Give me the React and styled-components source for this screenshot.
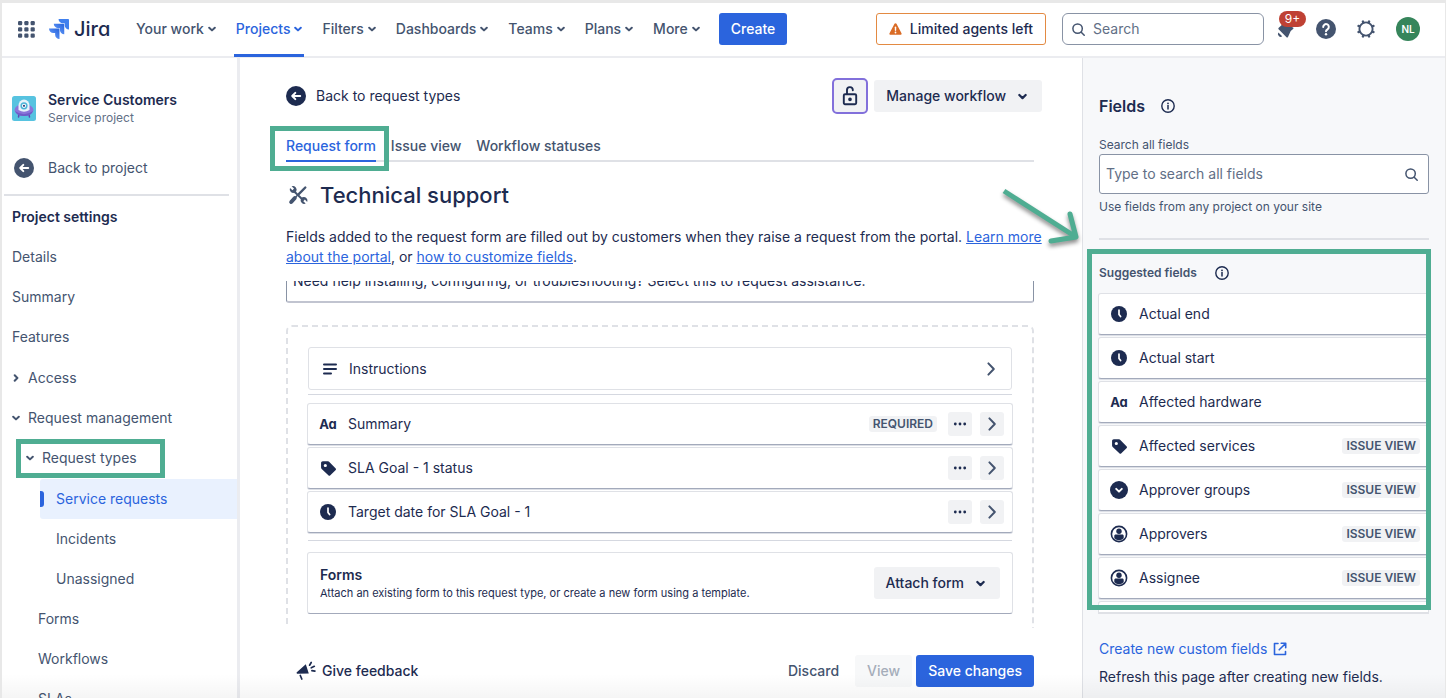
import React from "react";
import styled, { createGlobalStyle, css } from "styled-components";

const c = {
  ink: "#1D2B50",
  text: "#44546F",
  faint: "#626F86",
  blue: "#2B64DD",
  line: "#DFE1E6",
  soft: "#EBECF0",
  fill: "#F1F2F4",
  green: "#4FAD92",
};

const GlobalStyle = createGlobalStyle`
  *, *::before, *::after { box-sizing: border-box; }
  body { margin: 0; background: #fff; }
  body, button, input { font-family: Inter, "Liberation Sans", sans-serif; font-size: 14px; line-height: 20px; color: ${c.ink}; }
  button { cursor: pointer; }
  ul, h1, h2, p { margin: 0; padding: 0; list-style: none; font-weight: inherit; }
  a { color: inherit; text-decoration: none; }
  svg { display: block; flex: none; }
`;

const Page = styled.div`
  position: relative;
  display: flex;
  flex-direction: column;
  height: 100vh;
  overflow: hidden;
  border: solid #e8e8e8;
  border-width: 3px 1px 0 2px;
  &::after {
    content: "";
    position: absolute;
    inset: auto 0 0 0;
    height: 24px;
    background: linear-gradient(rgba(0, 0, 0, 0), rgba(0, 0, 0, 0.04));
    pointer-events: none;
  }
`;

/* ---------- top bar ---------- */

const Header = styled.header`
  flex: none;
  display: flex;
  align-items: center;
  height: 55px;
  padding: 0 25px 1px 16px;
  border-bottom: 2px solid ${c.soft};
`;

const IconButton = styled.button`
  display: flex;
  align-items: center;
  justify-content: center;
  padding: 0;
  border: 0;
  background: none;
  color: ${c.text};
`;

const Logo = styled.a`
  display: flex;
  align-items: center;
  gap: 5px;
  width: 85px;
  margin-left: 14px;
  font-size: 20px;
  line-height: 28px;
  font-weight: 500;
  font-feature-settings: "cv11";
`;

const Nav = styled.nav`
  align-self: stretch;
  display: flex;
  gap: 16px;
`;

const NavItem = styled.a`
  position: relative;
  display: flex;
  align-items: center;
  gap: 4px;
  padding: 0 2px;
  font-weight: 500;
  white-space: nowrap;
  color: ${(p) => (p.$active ? c.blue : c.text)};
  ${(p) =>
    p.$active &&
    css`
      &::after {
        content: "";
        position: absolute;
        inset: auto 0 -2px 0;
        height: 3px;
        background: ${c.blue};
      }
    `}
`;

const Button = styled.button`
  display: inline-flex;
  align-items: center;
  justify-content: center;
  gap: 8px;
  height: 32px;
  padding: 0 12px;
  border: 0;
  border-radius: 3px;
  font-weight: 500;
  white-space: nowrap;
  background: ${(p) => ({ primary: c.blue, subtle: "transparent", warning: "#fff", off: "#F7F8F9" })[p.$kind] || c.fill};
  color: ${(p) => ({ primary: "#fff", subtle: c.text, off: "#A5ADBA" })[p.$kind] || c.ink};
  ${(p) => p.$kind === "warning" && `border: 1px solid #E38A42;`}
`;

const ChevronSlot = styled.span`
  display: flex;
  justify-content: center;
  width: 16px;
`;

const CreateSlot = styled.div`
  margin: 0 auto 0 17px;
`;

const SearchBox = styled.label`
  display: flex;
  align-items: center;
  gap: 8px;
  width: 202px;
  height: 32px;
  margin-left: 16px;
  padding: 0 9px;
  border: 1px solid #8993A5;
  border-radius: 6px;
  color: ${c.text};
  input {
    flex: 1;
    min-width: 0;
    padding: 0;
    border: 0;
    outline: 0;
    background: none;
  }
  input::placeholder { color: ${c.faint}; opacity: 1; }
`;

const Tools = styled.div`
  display: flex;
  align-items: center;
  gap: 20px;
  margin-left: 12px;
`;

const Bell = styled(IconButton)`
  position: relative;
  width: 20px;
  height: 20px;
`;

const Count = styled.span`
  position: absolute;
  left: 3px;
  top: -8px;
  width: 27px;
  height: 16px;
  border-radius: 8px;
  background: #BF4134;
  color: #fff;
  font-size: 12px;
  line-height: 16px;
  text-align: center;
`;

const Avatar = styled.button`
  width: 24px;
  height: 24px;
  padding: 0;
  border: 0;
  border-radius: 50%;
  background: #36855B;
  color: #fff;
  font-size: 10px;
  line-height: 24px;
  font-weight: 600;
`;

/* ---------- sidebar ---------- */

const Body = styled.div`
  flex: 1;
  min-height: 0;
  display: flex;
`;

const Sidebar = styled.aside`
  flex: none;
  width: 238px;
  overflow: hidden;
  border-right: 3px solid ${c.soft};
  color: ${c.text};
`;

const Project = styled.div`
  display: flex;
  align-items: center;
  gap: 12px;
  padding: 32px 10px 0;
`;

const ProjectName = styled.div`
  font-weight: 600;
  color: ${c.ink};
`;

const ProjectKind = styled.div`
  font-size: 12px;
  line-height: 16px;
  color: ${c.faint};
`;

const BackLink = styled.a`
  display: flex;
  align-items: center;
  gap: ${(p) => p.$gap || 14}px;
`;

const SideBack = styled.div`
  margin: 0 8px 0 2px;
  padding: 32px 10px 16px;
  border-bottom: 2px solid ${c.line};
`;

const SideTitle = styled.h2`
  padding: 0 10px;
  font-size: 14px;
  line-height: 41px;
  font-weight: 600;
  color: ${c.ink};
`;

const Tree = styled.ul`
  ${(p) => p.$gapTop && `padding-top: 1px;`}
`;

const TreeLink = styled.a`
  position: relative;
  display: flex;
  align-items: center;
  gap: 8px;
  height: 40px;
  padding-left: ${(p) => p.$indent}px;
`;

const CurrentLink = styled(TreeLink)`
  margin-left: 38px;
  padding-left: 16px;
  border-radius: 3px 0 0 3px;
  background: #E9F1FE;
  color: ${c.blue};
  &::before {
    content: "";
    position: absolute;
    left: 0;
    top: 12px;
    width: 4px;
    height: 16px;
    border-radius: 0 3px 3px 0;
    background: ${c.blue};
  }
`;

const Frame = styled.span`
  position: absolute;
  inset: ${(p) => p.$inset};
  border: 5px solid ${c.green};
  pointer-events: none;
`;

/* ---------- main column ---------- */

const Main = styled.main`
  flex: 1;
  min-width: 0;
  display: flex;
  flex-direction: column;
  padding: 20px 48px 11px 46px;
`;

const TopRow = styled.div`
  display: flex;
  align-items: center;
  gap: 6px;
  margin-right: -8px;
  a { margin-right: auto; }
`;

const LockButton = styled(IconButton)`
  width: 36px;
  height: 36px;
  border: 2px solid #8270DB;
  border-radius: 5px;
  background: ${c.fill};
  color: ${c.ink};
`;

const Tabs = styled.nav`
  display: flex;
  gap: 15px;
  margin-top: 16px;
  border-bottom: 2px solid ${c.line};
`;

const Tab = styled.a`
  position: relative;
  padding: 6px 0 4px;
  font-weight: 500;
  color: ${(p) => (p.$active ? c.blue : c.text)};
  ${(p) => p.$active && `box-shadow: 0 2px ${c.blue};`}
`;

const TitleRow = styled.div`
  display: flex;
  align-items: center;
  gap: 10px;
  margin-top: 19px;
  color: ${c.text};
`;

const Title = styled.h1`
  font-size: 22px;
  line-height: 28px;
  font-weight: 500;
  color: ${c.ink};
`;

const Intro = styled.p`
  margin: 18px -8px 14px 0;
  a { color: ${c.blue}; text-decoration: underline; }
`;

const Scroller = styled.div`
  flex: 1;
  min-height: 0;
  overflow: hidden;
`;

const DescriptionInput = styled.input`
  display: block;
  width: 100%;
  height: 44px;
  margin-top: -22px;
  padding: 0 6px;
  border: 1px solid #8993A5;
  border-bottom: 2px solid #C1C4D0;
  border-radius: 3px;
`;

const DropZone = styled.section`
  margin-top: 22px;
  padding: 20px 19px 60px;
  border: 2px dashed ${c.line};
  border-radius: 6px;
`;

const cardBase = css`
  display: flex;
  align-items: center;
  background: #fff;
  border-radius: 3px;
`;

const InstructionsCard = styled.div`
  ${cardBase}
  height: 43px;
  margin: 0 1px;
  padding: 0 12px 0 13px;
  border: 1px solid ${c.line};
  gap: 11px;
`;

const Rule = styled.hr`
  height: 1px;
  margin: ${(p) => p.$margin};
  border: 0;
  background: #D5D8E0;
`;

const CardList = styled.ul`
  display: flex;
  flex-direction: column;
  gap: 2px;
`;

const FieldCard = styled.li`
  ${cardBase}
  flex: none;
  height: 42px;
  padding: 0 8px 0 11px;
  gap: 11px;
  border: 1px solid ${c.line};
  border-bottom-color: #A3AABB;
  box-shadow: 0 1px #DCDFE6;
`;

const FieldName = styled.span`
  flex: 1;
`;

const Glyph = styled.span`
  display: flex;
  justify-content: center;
  width: 18px;
  color: ${c.ink};
  font-size: 13px;
  font-weight: 700;
  font-feature-settings: "cv11";
`;

const Lozenge = styled.span`
  padding: 0 4px;
  border-radius: 3px;
  background: ${c.fill};
  color: ${c.text};
  font-size: 12px;
  line-height: 16px;
  font-weight: 600;
`;

const Square = styled(IconButton)`
  width: 24px;
  height: 24px;
  border-radius: 3px;
  background: ${c.fill};
`;

const Actions = styled.div`
  display: flex;
  align-items: center;
  gap: 8px;
`;

const FormsCard = styled.div`
  ${cardBase}
  justify-content: space-between;
  height: 62px;
  padding: 0 12px;
  border: 1px solid ${c.line};
  border-bottom-color: #A3AABB;
`;

const FormsTitle = styled.h2`
  font-size: 14px;
  font-weight: 600;
`;

const FormsNote = styled.p`
  font-size: 11px;
  line-height: 16px;
`;

const Footer = styled.footer`
  display: flex;
  align-items: center;
  gap: 4px;
  margin-top: 27px;
`;

const Feedback = styled.button`
  display: flex;
  align-items: center;
  gap: 6px;
  margin-right: auto;
  padding: 0 0 0 10px;
  border: 0;
  background: none;
  font-weight: 500;
`;

/* ---------- fields panel ---------- */

const Panel = styled.aside`
  position: relative;
  flex: none;
  width: 363px;
  display: flex;
  flex-direction: column;
  padding: 38px 16px 11px;
  border-left: 1px solid ${c.line};
  background: #F7F8FA;
`;

const PanelTitle = styled.h2`
  display: flex;
  align-items: center;
  gap: 16px;
  font-size: 16px;
  font-weight: 600;
`;

const FieldLabel = styled.label`
  margin-top: 21px;
  font-size: 12px;
  line-height: 16px;
  color: ${c.text};
`;

const PanelSearch = styled(SearchBox)`
  width: auto;
  height: 40px;
  margin: 1px 0 5px;
  padding: 0 10px 0 6px;
  border-radius: 3px;
  background: #fff;
`;

const Hint = styled.p`
  font-size: 12px;
  line-height: 16px;
  color: ${c.text};
`;

const Suggested = styled.section`
  position: relative;
  flex: 1;
  min-height: 0;
  display: flex;
  flex-direction: column;
  margin-top: 23px;
  border-top: 2px solid ${c.line};
`;

const SuggestedTitle = styled.h2`
  display: flex;
  align-items: center;
  gap: 18px;
  padding: 23px 0 10px;
  font-size: 12px;
  font-weight: 600;
  color: ${c.text};
  svg { color: ${c.ink}; }
`;

const SuggestedList = styled(CardList)`
  flex: 1;
  min-height: 0;
  margin-left: -1px;
  overflow: hidden;
  border-bottom: 2px solid ${c.line};
`;

const PanelLink = styled.a`
  display: flex;
  align-items: center;
  gap: 6px;
  margin: 25px 0 8px;
  color: ${c.blue};
`;

const Pointer = styled.svg`
  position: absolute;
  left: -84px;
  top: 124px;
  filter: drop-shadow(0 3px 2px rgba(0, 0, 0, 0.45));
  pointer-events: none;
`;

/* ---------- icons ---------- */

const Chevron = ({ dir = "down", size = 8, w = 2 }) => (
  <svg width={size} height={size} viewBox="0 0 8 8" fill="none" stroke="currentColor" strokeWidth={w} strokeLinecap="round" strokeLinejoin="round">
    <path d={dir === "down" ? "M1.2 2.7 4 5.4l2.8-2.7" : "M2.7 1.2 5.4 4 2.7 6.8"} />
  </svg>
);

const DropChevron = () => <ChevronSlot><Chevron size={9} /></ChevronSlot>;

const ArrowLeft = ({ color }) => (
  <svg width="20" height="20" viewBox="0 0 20 20">
    <circle cx="10" cy="10" r="10" fill={color} />
    <path d="M14.2 10H6.2M9.3 6.9 6.2 10l3.1 3.1" fill="none" stroke="#fff" strokeWidth="2" strokeLinecap="round" strokeLinejoin="round" />
  </svg>
);

const Info = () => (
  <svg width="14" height="14" viewBox="0 0 14 14">
    <circle cx="7" cy="7" r="6.2" fill="none" stroke="currentColor" strokeWidth="1.4" />
    <circle cx="7" cy="4.3" r=".9" fill="currentColor" />
    <path d="M7 6.5v3.6" stroke="currentColor" strokeWidth="1.5" strokeLinecap="round" />
  </svg>
);

const SearchIcon = () => (
  <svg width="13" height="13" viewBox="0 0 13 13" fill="none" stroke="currentColor" strokeWidth="1.5" strokeLinecap="round">
    <circle cx="5.6" cy="5.6" r="4.7" />
    <path d="m9.2 9.2 3 3" />
  </svg>
);

const Clock = () => (
  <svg width="16" height="16" viewBox="0 0 16 16">
    <circle cx="8" cy="8" r="8" fill="currentColor" />
    <path d="M8 4.2V8.4l1.6 2.2" fill="none" stroke="#fff" strokeWidth="1.7" strokeLinecap="round" strokeLinejoin="round" />
  </svg>
);

const Tag = () => (
  <svg width="17" height="17" viewBox="0 0 16 16">
    <path fillRule="evenodd" fill="currentColor" d="M2.6 1.2h4.9c.5 0 1 .2 1.3.6l6 6.1c.4.4.4 1 0 1.4l-5.3 5.3c-.4.4-1 .4-1.4 0L1.6 8.5a2 2 0 0 1-.6-1.400V2.800c0-.9.700-1.600 1.600-1.600ZM5 3.700a1.500 1.500 0 1 0 0 3 1.500 1.500 0 0 0 0-3Z" />
  </svg>
);

const Group = () => (
  <svg width="18" height="18" viewBox="0 0 18 18">
    <circle cx="9" cy="9" r="9" fill="currentColor" />
    <path d="m6.200 7.900 2.800 2.700 2.800-2.700" fill="none" stroke="#fff" strokeWidth="2" strokeLinecap="round" strokeLinejoin="round" />
  </svg>
);

const Person = () => (
  <svg width="18" height="18" viewBox="0 0 18 18" fill="currentColor">
    <circle cx="9" cy="9" r="7.600" fill="none" stroke="currentColor" strokeWidth="1.600" />
    <circle cx="9" cy="6.200" r="2.700" />
    <path d="M4.300 10.900c0-.8.600-1.400 1.400-1.400h6.600c.8 0 1.400.6 1.400 1.400v2.300c-1.200 1.300-2.900 2-4.700 2s-3.500-.7-4.700-2Z" />
  </svg>
);

const Dots = () => (
  <svg width="14" height="4" viewBox="0 0 14 4" fill={c.ink}>
    <circle cx="2.300" cy="2" r="1.400" />
    <circle cx="7" cy="2" r="1.400" />
    <circle cx="11.700" cy="2" r="1.400" />
  </svg>
);

const AppGrid = () => (
  <svg width="17" height="17" viewBox="0 0 17 17" fill="currentColor">
    {[0, 6.3, 12.6].map((y) => [0, 6.3, 12.6].map((x) => <rect key={`${x}-${y}`} x={x} y={y} width="4.200" height="4.200" rx="1.200" />))}
  </svg>
);

const JiraMark = () => (
  <svg width="20" height="20" viewBox="0 0 24 24">
    <defs>
      <linearGradient id="mark" x1="1" y1="0" x2="0.300" y2="0.700">
        <stop offset="0.200" stopColor="#2F6BE0" />
        <stop offset="1" stopColor="#5C93F5" />
      </linearGradient>
    </defs>
    <path fill="url(#mark)" d="M11.571 11.513H0a5.218 5.218 0 0 0 5.232 5.215h2.130v2.057A5.215 5.215 0 0 0 12.575 24V12.518a1.005 1.005 0 0 0-1.005-1.005z" />
    <path fill="url(#mark)" d="M17.294 5.757H5.736a5.215 5.215 0 0 0 5.215 5.214h2.129v2.058a5.218 5.218 0 0 0 5.215 5.214V6.758a1.001 1.001 0 0 0-1.001-1.001z" />
    <path fill="#4080EE" d="M23.013 0H11.455a5.215 5.215 0 0 0 5.215 5.215h2.129v2.057A5.215 5.215 0 0 0 24 12.483V1.005A1.001 1.001 0 0 0 23.013 0Z" />
  </svg>
);

const Warning = () => (
  <svg width="13" height="12" viewBox="0 0 13 12">
    <path d="M5.500.8a1.100 1.100 0 0 1 2 0l5 9.400c.4.800-.1 1.600-1 1.600h-10c-.9 0-1.400-.8-1-1.600Z" fill="#DA6C26" />
    <path d="M6.500 4.200v3" stroke="#fff" strokeWidth="1.400" strokeLinecap="round" />
    <circle cx="6.500" cy="9.500" r=".9" fill="#fff" />
  </svg>
);

const BellIcon = () => (
  <svg width="20" height="20" viewBox="0 0 20 20" fill="currentColor">
    <path d="M3 8.500 8 4l9 4.500c.6.400.6 1 .1 1.600l-2.400 2-2.700 5.800c-.3.700-1 .8-1.500.3L2.600 10.300c-.5-.5-.3-1.300.4-1.800Z" />
    <path d="m2.400 13.600 3.800 3.700a2.700 2.700 0 0 1-3.800-3.700Z" />
  </svg>
);

const Help = () => (
  <svg width="20" height="20" viewBox="0 0 20 20">
    <circle cx="10" cy="10" r="10" fill="currentColor" />
    <path d="M7.200 8a2.800 2.800 0 1 1 4.300 2.300c-.9.600-1.500 1-1.500 2" fill="none" stroke="#fff" strokeWidth="2" strokeLinecap="round" />
    <circle cx="10" cy="15.200" r="1.200" fill="#fff" />
  </svg>
);

const Gear = () => (
  <svg width="20" height="20" viewBox="0 0 20 20" fill="none" stroke="currentColor">
    <circle cx="10" cy="10" r="6.600" strokeWidth="1.900" />
    {[0, 45, 90, 135, 180, 225, 270, 315].map((a) => (
      <path key={a} d="M10 3V1.900" strokeWidth="2.400" strokeLinecap="round" transform={`rotate(${a + 22.5} 10 10)`} />
    ))}
  </svg>
);

const ProjectIcon = () => (
  <svg width="24" height="25" viewBox="0 0 24 25">
    <rect width="24" height="25" rx="2.500" fill="#57C3E0" />
    <path d="M7 18.500 6.500 21M17 18.500l.5 2.500" stroke="#5B4BB5" strokeWidth="1.500" strokeLinecap="round" />
    <ellipse cx="12" cy="14" rx="9.500" ry="6" fill="#8A74DA" />
    <path d="M6.500 9.500a5.500 6 0 0 1 11 0V14q-5.500 3.500-11 0Z" fill="#E6F3FB" />
    <circle cx="12" cy="9.800" r="3.600" fill="#4CB4D8" />
    <circle cx="12" cy="9.800" r="2.100" fill="#fff" />
    <circle cx="12" cy="9.800" r="1.100" fill="#35407A" />
    <path d="M3 15q9 6.500 18 0-1.500 5-9 5t-9-5Z" fill="#6F5BC8" />
  </svg>
);

const Lock = () => (
  <svg width="16" height="20" viewBox="0 0 16 20" fill="none" stroke="currentColor" strokeWidth="1.900" strokeLinecap="round" strokeLinejoin="round">
    <rect x="1.800" y="8.300" width="12.400" height="10" rx="1.200" />
    <path d="M5 8V4.200a2.900 2.900 0 0 1 5.800-.4v.4" />
    <circle cx="8" cy="13.300" r=".9" fill="currentColor" />
  </svg>
);

const ToolsIcon = () => (
  <svg width="24" height="20" viewBox="0 0 24 20">
    <g fill="none" stroke="currentColor">
      <path d="M19.300 2.500 13 8.800" strokeWidth="2.400" strokeLinecap="round" />
      <path d="M13 8.800 9.500 12.300" strokeWidth="1.500" />
      <path d="M8.800 13 5.200 17" strokeWidth="4" strokeLinecap="round" />
      <path d="m8 6.200 9 8.800" strokeWidth="2" />
    </g>
    <path fill="currentColor" d="M5.600 1.300 8 3.600 6.500 5.300 4 3a3.600 3.600 0 0 0 5 4.600l1.300-1.300A3.700 3.700 0 0 0 5.600 1.300ZM19.700 18.600l-2.400-2.300 1.500-1.700 2.400 2.300a3.600 3.600 0 0 0-4.900-4.600L15 13.600a3.700 3.700 0 0 0 4.700 5Z" />
  </svg>
);

const Lines = () => (
  <svg width="16" height="12" viewBox="0 0 16 12" stroke={c.ink} strokeWidth="2" strokeLinecap="round">
    <path d="M2 1.500h12M2 6h12M2 10.500h7" />
  </svg>
);

const Megaphone = () => (
  <svg width="20" height="20" viewBox="0 0 20 20" fill="none" stroke="currentColor" strokeWidth="1.700" strokeLinecap="round">
    <path d="M.8 11.200 9.800 3.300l3 9.200-11 .3c-1 0-1.600-1-1-1.600Z" fill="currentColor" stroke="none" />
    <path d="M4.300 14.500 5.800 18M13.600 4.200l1.600-2.700M15.300 6.800l3-1.500M15.900 9.600l3 .6" />
  </svg>
);

const External = () => (
  <svg width="14" height="14" viewBox="0 0 14 14" fill="none" stroke="currentColor" strokeWidth="1.600" strokeLinecap="round" strokeLinejoin="round">
    <path d="M5 1.500H1.500v11h11V9.500M8.200 1.300h4.500v4.500M12.300 1.700 6.200 7.800" />
  </svg>
);

const glyphs = { clock: <Clock />, tag: <Tag />, group: <Group />, person: <Person />, text: "Aa" };

/* ---------- data ---------- */

const navItems = ["Your work", "Projects", "Filters", "Dashboards", "Teams", "Plans", "More"];

const formFields = [
  { name: "Summary", icon: "text", required: true },
  { name: "SLA Goal - 1 status", icon: "tag" },
  { name: "Target date for SLA Goal - 1", icon: "clock" },
];

const suggested = [
  { name: "Actual end", icon: "clock" },
  { name: "Actual start", icon: "clock" },
  { name: "Affected hardware", icon: "text" },
  { name: "Affected services", icon: "tag", view: true },
  { name: "Approver groups", icon: "group", view: true },
  { name: "Approvers", icon: "person", view: true },
  { name: "Assignee", icon: "person", view: true },
];

/* ---------- page ---------- */

const TopBar = () => (
  <Header>
    <IconButton aria-label="Switch app"><AppGrid /></IconButton>
    <Logo href="#"><JiraMark />Jira</Logo>
    <Nav>
      {navItems.map((n) => (
        <NavItem key={n} href="#" $active={n === "Projects"}>{n}<Chevron /></NavItem>
      ))}
    </Nav>
    <CreateSlot><Button $kind="primary">Create</Button></CreateSlot>
    <Button $kind="warning"><Warning />Limited agents left</Button>
    <SearchBox>
      <SearchIcon />
      <input type="search" placeholder="Search" aria-label="Search" />
    </SearchBox>
    <Tools>
      <Bell aria-label="Notifications"><BellIcon /><Count>9+</Count></Bell>
      <IconButton aria-label="Help"><Help /></IconButton>
      <IconButton aria-label="Settings"><Gear /></IconButton>
      <Avatar>NL</Avatar>
    </Tools>
  </Header>
);

const SideNav = () => (
  <Sidebar>
    <Project>
      <ProjectIcon />
      <div>
        <ProjectName>Service Customers</ProjectName>
        <ProjectKind>Service project</ProjectKind>
      </div>
    </Project>
    <SideBack>
      <BackLink href="#"><ArrowLeft color={c.text} />Back to project</BackLink>
    </SideBack>
    <SideTitle>Project settings</SideTitle>
    <Tree>
      <li><TreeLink href="#" $indent={10}>Details</TreeLink></li>
      <li><TreeLink href="#" $indent={10}>Summary</TreeLink></li>
      <li><TreeLink href="#" $indent={10}>Features</TreeLink></li>
    </Tree>
    <Tree $gapTop>
      <li><TreeLink href="#" $indent={10}><Chevron dir="right" />Access</TreeLink></li>
      <li>
        <TreeLink href="#" $indent={10}><Chevron />Request management</TreeLink>
        <Tree>
          <li>
            <TreeLink href="#" $indent={24}>
              <Chevron />Request types
              <Frame $inset="1px 72px 0 14px" />
            </TreeLink>
            <Tree $gapTop>
              <li><CurrentLink href="#">Service requests</CurrentLink></li>
              <li><TreeLink href="#" $indent={54}>Incidents</TreeLink></li>
              <li><TreeLink href="#" $indent={54}>Unassigned</TreeLink></li>
            </Tree>
          </li>
          <li><TreeLink href="#" $indent={36}>Forms</TreeLink></li>
          <li><TreeLink href="#" $indent={36}>Workflows</TreeLink></li>
          <li><TreeLink href="#" $indent={36}>SLAs</TreeLink></li>
        </Tree>
      </li>
    </Tree>
  </Sidebar>
);

const Editor = () => (
  <Main>
    <TopRow>
      <BackLink href="#" $gap={10}><ArrowLeft color={c.ink} />Back to request types</BackLink>
      <LockButton aria-label="Unlocked"><Lock /></LockButton>
      <Button>Manage workflow<DropChevron /></Button>
    </TopRow>
    <Tabs>
      <Tab href="#" $active>Request form<Frame $inset="-4px -13px -11px -16px" /></Tab>
      <Tab href="#">Issue view</Tab>
      <Tab href="#">Workflow statuses</Tab>
    </Tabs>
    <TitleRow><ToolsIcon /><Title>Technical support</Title></TitleRow>
    <Intro>
      Fields added to the request form are filled out by customers when they raise a request from the portal.{" "}
      <a href="#">Learn more about the portal</a>, or <a href="#">how to customize fields</a>.
    </Intro>
    <Scroller>
      <DescriptionInput
        aria-label="Description"
        defaultValue="Need help installing, configuring, or troubleshooting? Select this to request assistance."
      />
      <DropZone>
        <InstructionsCard>
          <Lines />
          <FieldName>Instructions</FieldName>
          <IconButton aria-label="Open instructions"><Chevron dir="right" size={16} w={1} /></IconButton>
        </InstructionsCard>
        <Rule $margin="4px 1px 8px" />
        <CardList>
          {formFields.map((f) => (
            <FieldCard key={f.name}>
              <Glyph>{glyphs[f.icon]}</Glyph>
              <FieldName>{f.name}</FieldName>
              {f.required && <Lozenge>REQUIRED</Lozenge>}
              <Actions>
                <Square aria-label="More actions"><Dots /></Square>
                <Square aria-label="Expand"><Chevron dir="right" size={16} w={1} /></Square>
              </Actions>
            </FieldCard>
          ))}
        </CardList>
        <Rule $margin="7px 1px 11px" />
        <FormsCard>
          <div>
            <FormsTitle>Forms</FormsTitle>
            <FormsNote>Attach an existing form to this request type, or create a new form using a template.</FormsNote>
          </div>
          <Button>Attach form<DropChevron /></Button>
        </FormsCard>
      </DropZone>
    </Scroller>
    <Footer>
      <Feedback><Megaphone />Give feedback</Feedback>
      <Button $kind="subtle">Discard</Button>
      <Button $kind="off" disabled>View</Button>
      <Button $kind="primary">Save changes</Button>
    </Footer>
  </Main>
);

const FieldsPanel = () => (
  <Panel>
    <PanelTitle>Fields <Info /></PanelTitle>
    <FieldLabel htmlFor="field-search">Search all fields</FieldLabel>
    <PanelSearch as="div">
      <input id="field-search" type="text" placeholder="Type to search all fields" />
      <SearchIcon />
    </PanelSearch>
    <Hint>Use fields from any project on your site</Hint>
    <Suggested>
      <SuggestedTitle>Suggested fields <Info /></SuggestedTitle>
      <SuggestedList>
        {suggested.map((f) => (
          <FieldCard key={f.name}>
            <Glyph>{glyphs[f.icon]}</Glyph>
            <FieldName>{f.name}</FieldName>
            {f.view && <Lozenge>ISSUE VIEW</Lozenge>}
          </FieldCard>
        ))}
        <FieldCard />
      </SuggestedList>
      <Frame $inset="9px -2px 4px -12px" />
    </Suggested>
    <PanelLink href="#">Create new custom fields <External /></PanelLink>
    <p>Refresh this page after creating new fields.</p>
    <Pointer width="90" height="66" viewBox="0 0 90 66" fill="none" stroke={c.green} strokeWidth="5">
      <path d="M5 9 77 55" />
      <path d="M71 32l6 23-25 4" strokeLinecap="round" strokeLinejoin="round" />
    </Pointer>
  </Panel>
);

export default function App() {
  return (
    <Page>
      <GlobalStyle />
      <TopBar />
      <Body>
        <SideNav />
        <Editor />
        <FieldsPanel />
      </Body>
    </Page>
  );
}
